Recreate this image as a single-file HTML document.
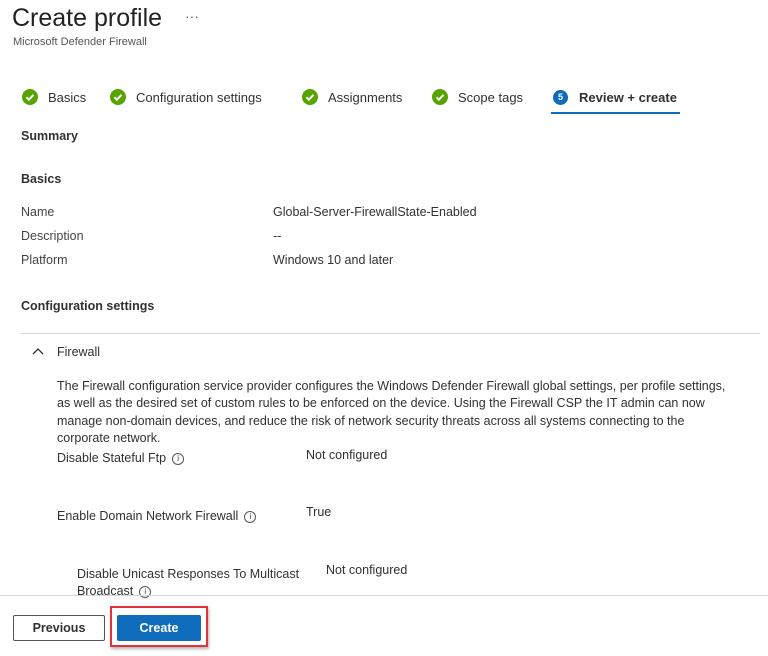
<!DOCTYPE html>
<html><head><style>
body{margin:0;width:768px;height:656px;background:#fff;font-family:"Liberation Sans",sans-serif;color:#323130;position:relative;overflow:hidden}
.a{position:absolute;white-space:nowrap}
.ck{position:absolute;width:16px;height:16px;border-radius:50%;background:#57a300;top:89px}
.ck svg{position:absolute;left:0;top:0}
.t{font-size:13px;top:90px}
.s{font-size:12.5px}
.b{font-weight:bold;font-size:12.5px}
.i{display:inline-block;width:10px;height:10px;border:1px solid #555;border-radius:50%;font-size:8px;line-height:10px;text-align:center;margin-left:6px;vertical-align:middle}
</style></head><body>
<div class="a" style="left:12px;top:4px;font-size:25px;color:#222">Create profile</div>
<div class="a" style="left:185px;top:8px;font-size:14px;color:#666">···</div>
<div class="a" style="left:13px;top:36px;font-size:11px;color:#555">Microsoft Defender Firewall</div>

<div class="ck" style="left:22px"><svg width="16" height="16"><path d="M4.5 8.3l2.4 2.4 4.6-4.9" stroke="#fff" stroke-width="2" fill="none"/></svg></div>
<div class="a t" style="left:48px">Basics</div>
<div class="ck" style="left:110px"><svg width="16" height="16"><path d="M4.5 8.3l2.4 2.4 4.6-4.9" stroke="#fff" stroke-width="2" fill="none"/></svg></div>
<div class="a t" style="left:136px">Configuration settings</div>
<div class="ck" style="left:302px"><svg width="16" height="16"><path d="M4.5 8.3l2.4 2.4 4.6-4.9" stroke="#fff" stroke-width="2" fill="none"/></svg></div>
<div class="a t" style="left:328px">Assignments</div>
<div class="ck" style="left:432px"><svg width="16" height="16"><path d="M4.5 8.3l2.4 2.4 4.6-4.9" stroke="#fff" stroke-width="2" fill="none"/></svg></div>
<div class="a t" style="left:458px">Scope tags</div>
<div class="a" style="left:553px;top:90px;width:15px;height:15px;border-radius:50%;background:#0f6cbd;color:#fff;font-size:9px;font-weight:bold;text-align:center;line-height:15px">5</div>
<div class="a t" style="left:579px;font-weight:bold">Review + create</div>
<div class="a" style="left:551px;top:112px;width:129px;height:2px;background:#0f6cbd"></div>

<div class="a b" style="left:21px;top:129px">Summary</div>
<div class="a b" style="left:21px;top:172px">Basics</div>
<div class="a s" style="left:21px;top:205px;color:#444">Name</div>
<div class="a s" style="left:273px;top:205px">Global-Server-FirewallState-Enabled</div>
<div class="a s" style="left:21px;top:229px;color:#444">Description</div>
<div class="a s" style="left:273px;top:229px">--</div>
<div class="a s" style="left:21px;top:253px;color:#444">Platform</div>
<div class="a s" style="left:273px;top:253px">Windows 10 and later</div>
<div class="a b" style="left:21px;top:299px">Configuration settings</div>
<div class="a" style="left:21px;top:333px;width:739px;height:1px;background:#d6d6d6"></div>
<svg class="a" style="left:32px;top:347px" width="12" height="10"><path d="M1 7l5-5 5 5" stroke="#333" stroke-width="1.3" fill="none"/></svg>
<div class="a s" style="left:57px;top:345px">Firewall</div>
<div class="a s" style="left:57px;top:378px;line-height:17.3px">The Firewall configuration service provider configures the Windows Defender Firewall global settings, per profile settings,<br>as well as the desired set of custom rules to be enforced on the device. Using the Firewall CSP the IT admin can now<br>manage non-domain devices, and reduce the risk of network security threats across all systems connecting to the<br>corporate network.</div>
<div class="a s" style="left:57px;top:451px">Disable Stateful Ftp<span class="i">i</span></div>
<div class="a s" style="left:306px;top:448px">Not configured</div>
<div class="a s" style="left:57px;top:509px">Enable Domain Network Firewall<span class="i">i</span></div>
<div class="a s" style="left:306px;top:505px">True</div>
<div class="a s" style="left:77px;top:566px;line-height:17px">Disable Unicast Responses To Multicast<br>Broadcast<span class="i">i</span></div>
<div class="a s" style="left:326px;top:563px">Not configured</div>
<div class="a" style="left:0;top:595px;width:768px;height:1px;background:#d6d6d6"></div>

<div class="a" style="left:13px;top:615px;width:90px;height:24px;border:1px solid #555;border-radius:2px;font-size:12.5px;font-weight:bold;text-align:center;line-height:24px">Previous</div>
<div class="a" style="left:110px;top:606px;width:94px;height:37px;border:2px solid #e0343c;box-shadow:1px 2px 3px rgba(0,0,0,.3)"></div>
<div class="a" style="left:117px;top:615px;width:84px;height:26px;background:#0f6cbd;border-radius:2px;color:#fff;font-size:12.5px;font-weight:bold;text-align:center;line-height:26px">Create</div>
</body></html>
